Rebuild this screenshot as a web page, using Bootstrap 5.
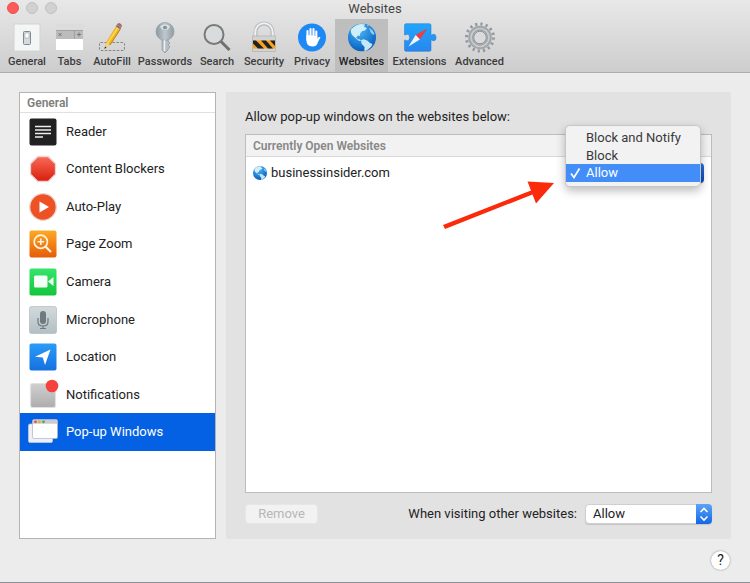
<!DOCTYPE html>
<html lang="en">
<head>
<meta charset="utf-8">
<meta name="viewport" content="width=device-width, initial-scale=1">
<title>Websites</title>
<link href="https://cdn.jsdelivr.net/npm/bootstrap@5.3.0/dist/css/bootstrap.min.css" rel="stylesheet">
<style>
body{font-family:Roboto,"Liberation Sans",sans-serif;font-size:13px;line-height:18px;color:#222;background:#ececec}
.win{min-height:100vh;border-bottom:1px solid #8a9094}
.titlebar{height:73px;background:linear-gradient(#e8e8e8,#cdcdcd);border-bottom:1px solid #adadad}
.caption-row{height:19px;color:#444}
.lights{left:7px;top:2px;gap:7px}
.light{width:12px;height:12px;border-radius:50%;background:#d2d1d1;border:1px solid #c2c1c1;padding:0}
.light-close{background:#fc5b57;border-color:#e9544f}
.tools{display:grid;grid-template-columns:46px 39px 46px 60px 44px 50px 46px 53px 63px 57px;height:53px;padding-left:4px}
.tool{border:0;background:none;padding:4px 0 0;font-size:11px;line-height:18px;color:#3c3c3c;white-space:nowrap;display:flex;flex-direction:column;align-items:center;font-weight:500}
.tool svg{width:32px;height:30px;flex:none;overflow:visible}
.tool.on{background:#bebebe;color:#222}
.main-area{padding:19px 19px 0 19px;gap:10px}
.side{width:197px;background:#fff;border:1px solid #b4b4b4;flex:none}
.side-head{height:20px;line-height:20px;padding-left:7px;font-size:12px;font-weight:600;color:#7d7d7d;border-bottom:1px solid #e0e0e0}
.side-list{height:338px;display:grid;grid-template-rows:repeat(9,1fr)}
.side-item{border:0;background:none;width:100%;height:100%;padding:0 0 0 7px;gap:7px;color:#222}
.side-item svg{width:32px;height:32px;flex:none;overflow:visible}
.side-item.on{background:#0561e4;color:#fff}
.panel{background:#e2e2e2;border-radius:2px;padding:16px 19px 15px;min-width:0}
.sites{background:#fff;border:1px solid #bcbcbc}
.sites-head{height:22px;line-height:23px;padding-left:7px;font-size:12px;font-weight:600;color:#888;background:#f2f2f2;border-bottom:1px solid #d9d9d9}
.site-row{height:32px;padding:0 7px 0 6px;gap:3px}
.site-row svg.globe{width:16px;height:16px}
.pick{position:relative}
.pick .form-select{font-size:13px;line-height:18px;height:20px;padding:0 24px 0 7px;border:1px solid #cfcfcf;border-radius:4px;background:#fff;color:#222;box-shadow:0 1px 1px #0002}
.pick svg{position:absolute;right:0;top:0;width:16px;height:20px;pointer-events:none}
.pick-row{width:138px}
.pick-other{width:127px}
.choices{position:absolute;right:3px;top:-38px;width:136px;padding:3px 0 4px;background:#f2f2f3;border:1px solid #c6c6c6;border-radius:5px;box-shadow:0 4px 10px #0004;z-index:3;list-style:none;margin:0}
.choices button{display:block;width:100%;border:0;background:none;text-align:left;padding:0 0 0 20px;height:18px;line-height:18px;color:#3a3a3a;position:relative;white-space:nowrap}
.choices li:nth-child(2) button{height:17px;line-height:17px}
.choices button.on{background:#428df8;color:#fff}
.choices .tick{position:absolute;left:4px;top:3px;width:11px;height:12px;right:auto}
.arrow{position:absolute;left:197px;top:45px;width:114px;height:52px}
.remove{width:73px;height:20px;line-height:18px;padding:0;border:1px solid #e6e6e6;border-radius:4px;background:#f2f2f2;color:#b6b6b6}
.foot{margin-top:11px}
.bottom{height:43px;padding:12px 20px 0 0}
.help{width:19px;height:19px;border-radius:50%;border:0;background:#fff;box-shadow:0 0 2px #0007;padding:0;font-size:14px;line-height:19px;color:#222}
</style>
<script src="https://cdn.jsdelivr.net/npm/bootstrap@5.3.0/dist/js/bootstrap.bundle.min.js"></script>
</head>
<body>
<svg width="0" height="0" class="position-absolute" aria-hidden="true">
<defs>
<radialGradient id="sea" cx=".4" cy=".25" r=".8"><stop offset="0" stop-color="#4db4ef"/><stop offset=".6" stop-color="#1d7fd6"/><stop offset="1" stop-color="#0a56ae"/></radialGradient>
<linearGradient id="gBlue" x2="0" y2="1"><stop stop-color="#2a9cf8"/><stop offset="1" stop-color="#1570e0"/></linearGradient>
<linearGradient id="gPuzzle" x2="0" y2="1"><stop stop-color="#21a6fb"/><stop offset="1" stop-color="#2787f0"/></linearGradient>
<linearGradient id="gStep" x2="0" y2="1"><stop stop-color="#5aa5f8"/><stop offset="1" stop-color="#1466e8"/></linearGradient>
<linearGradient id="gDeep" x2="0" y2="1"><stop stop-color="#2a72df"/><stop offset="1" stop-color="#0a48bb"/></linearGradient>
<linearGradient id="gRed" x2="0" y2="1"><stop stop-color="#fa6a58"/><stop offset="1" stop-color="#d81e0c"/></linearGradient>
<linearGradient id="gOrange" x2="0" y2="1"><stop stop-color="#fbaa25"/><stop offset="1" stop-color="#e65c0a"/></linearGradient>
<linearGradient id="gGreen" x2="0" y2="1"><stop stop-color="#35e46a"/><stop offset="1" stop-color="#14c53c"/></linearGradient>
<linearGradient id="gGrey" x2="0" y2="1"><stop stop-color="#d3dadc"/><stop offset="1" stop-color="#b3bfc3"/></linearGradient>
<linearGradient id="gNote" x2="0" y2="1"><stop stop-color="#d0d0d0"/><stop offset="1" stop-color="#adadad"/></linearGradient>
<linearGradient id="gKey" x2="1"><stop stop-color="#8d999f"/><stop offset=".5" stop-color="#bec8ce"/><stop offset="1" stop-color="#8e9aa1"/></linearGradient>
<symbol id="earth" viewBox="0 0 28 28">
<circle cx="14" cy="14" r="14" fill="url(#sea)"/>
<path d="M3 6Q7 1 13 .4l4 .6-1 2.200 3 1.200-2 2.500-2.800.6-2.400 3 .4 2-2.200-.6-1.800 2.200 1.800 1.700 2 .3 1 1.500-2.300-.3L7.500 14.500 4 11.500 2.800 8.500z" fill="#d0edfa"/>
<path d="M13 16.500l3-.8 3.500 1.600 2.500 2.200 2.500 1-1.300 2.700-3.200 2.800L18 27.300l-1.700.2.300-4.100-3-3.200z" fill="#c5e8f8"/>
<path d="M21 4l3.300 2.500L26.500 10l-1.300 1.500-2.700-2.700zM19 1.200l2 1-1.500.9z" fill="#8fcdf2"/>
</symbol>
</defs>
</svg>
<div class="win d-flex flex-column">
<header class="titlebar flex-shrink-0 position-relative">
<div class="lights d-flex position-absolute">
<button class="light light-close" aria-label="Close"></button><button class="light" aria-label="Minimize" disabled></button><button class="light" aria-label="Zoom" disabled></button>
</div>
<div class="caption-row text-center">Websites</div>
<nav class="tools" aria-label="Preferences">
<button class="tool"><svg viewBox="0 0 32 30" aria-hidden="true"><rect x="3" y="1" width="26" height="27" fill="#f4f6f6" stroke="#d2d4d4"/><rect x="12.500" y="8.500" width="7" height="13" rx="1" fill="#d4dbde" stroke="#7f898d"/><rect x="14" y="10" width="4" height="5" fill="#fff" stroke="#a5afb3" stroke-width=".7"/></svg>General</button>
<button class="tool"><svg viewBox="0 0 32 30" aria-hidden="true"><rect x="2" y="1" width="27" height="6" fill="#dcdcdc"/><path d="M2 7.500h27v9H2z" fill="#bcbcbc"/><path d="M2 7.500h27M20.500 7v9" stroke="#a1a1a1"/><rect x="2" y="16" width="27" height="11" fill="#fff"/><path d="M4.500 10l3 3m0-3l-3 3M23 11.500h4m-2-2v4" stroke="#777"/></svg>Tabs</button>
<button class="tool"><svg viewBox="0 0 32 30" aria-hidden="true"><rect x="3.500" y="19.500" width="25" height="8" rx="1" fill="none" stroke="#858585" stroke-dasharray="2.500 1.500"/><path d="M8.500 26l1.200-6L19.800 3.500l4.500 2.700L14 22z" fill="#f0b429"/><path d="M11.500 20.500L22 4.500" stroke="#fbdb50" stroke-width="1.500"/><path d="M14 22L24.300 6.200" stroke="#c17b0d"/><path d="M8.500 26l1.200-6 2 .5 2.200 1.500z" fill="#ecd0a4"/><path d="M8.500 26l.5-2.500 1.500 1z" fill="#222"/><path d="M19.800 3.500l4.500 2.700 1-1.700-4.500-2.700z" fill="#71777d"/><path d="M20.800 1.800Q22-.7 24.200.4q2.500 1.300 1.200 3.800z" fill="#b66370"/></svg>AutoFill</button>
<button class="tool"><svg viewBox="0 0 32 30" aria-hidden="true"><path d="M13 15h6v3l2 2-2 2 2 2-2 2v1l-3 3-3-3z" fill="#b4bec4" stroke="#8b969c" stroke-width=".7"/><circle cx="16" cy="8.500" r="9" fill="url(#gKey)" stroke="#8c999f" stroke-width=".7"/><path d="M11 3.500q5-4 10 0l-2 3h-6z" fill="#dce4e7"/><ellipse cx="16" cy="4.500" rx="2.200" ry="1.800" fill="#87939b"/><path d="M15.500 17v11" stroke="#edf1f3" stroke-width="1.500"/></svg>Passwords</button>
<button class="tool"><svg viewBox="0 0 32 30" aria-hidden="true"><circle cx="13" cy="11.500" r="9.500" fill="#d9dcdd" stroke="#797979" stroke-width="2"/><path d="M20 18.500l8.500 8.500" stroke="#707070" stroke-width="3"/></svg>Search</button>
<button class="tool"><svg viewBox="0 0 32 30" aria-hidden="true"><path d="M7.500 14V9a8.500 8.500 0 0 1 17 0v5" fill="none" stroke="#b4b8ba" stroke-width="4"/><path d="M7.300 14V9a8.700 8.700 0 0 1 17.400 0v5" fill="none" stroke="#eef0f1" stroke-width="2"/><rect x="4.500" y="13" width="23" height="15.500" fill="#d2d2d2" stroke="#aaa" stroke-width=".6"/><path d="M5 17.500h22v8H5z" fill="#f7a51f"/><path d="M5 17.500h3l8 8h-6l-5-5zM13 17.500h5l7 8h-5zM22 17.500h5v5.500z" fill="#222"/></svg>Security</button>
<button class="tool"><svg viewBox="0 0 32 30" aria-hidden="true"><circle cx="16" cy="14.500" r="14" fill="#1e88f5"/><path d="M11.500 8v9M14.500 6v11M17.500 6v11M20.300 8.500V18" stroke="#fff" stroke-width="2.100" stroke-linecap="round"/><path d="M10.400 12v5q0 6.500 6 6.500 4.600 0 5.600-4.500l2.400-4.500q-.8-1.500-2.400.3l-.7 1.200v-3z" fill="#fff"/></svg>Privacy</button>
<button class="tool on" aria-current="page"><svg viewBox="0 0 32 30" aria-hidden="true"><use href="#earth" x="2" y=".5" width="28" height="28"/></svg>Websites</button>
<button class="tool"><svg viewBox="0 0 32 30" aria-hidden="true"><path d="M2 .7h23.500q1.500 0 1.500 1.500v9.600q.8.700 1.500-.3 3.500-1 3.500 3t-3.500 3q-.7-1-1.500-.3v9.600q0 1.500-1.500 1.500H2q-1.500 0-1.500-1.500v-9.600q.8-.7 1.500.3 3.500 1 3.500-3t-3.500-3q-.7 1-1.500.3V2.200Q.5.700 2 .7z" fill="url(#gPuzzle)" stroke="#1e70cd" stroke-width=".5"/><path d="M23.500 5.500L11.700 12l4.200 4.500z" fill="#ee3d3d"/><path d="M4.500 23.500L11.700 12l4.200 4.500z" fill="#f2f6fa"/></svg>Extensions</button>
<button class="tool"><svg viewBox="0 0 32 30" aria-hidden="true"><circle cx="16" cy="14.500" r="13.500" fill="none" stroke="#92989b" stroke-width="3" stroke-dasharray="2.200 3.101"/><circle cx="16" cy="14.500" r="9.300" fill="none" stroke="#a0a6a9" stroke-width="5"/><circle cx="16" cy="14.500" r="9" fill="none" stroke="#c8cccd" stroke-width="1.700"/><circle cx="16" cy="14.500" r="6.300" fill="#d9dada" stroke="#888f93"/></svg>Advanced</button>
</nav>
</header>
<main class="main-area d-flex flex-grow-1">
<aside class="side">
<div class="side-head">General</div>
<ul class="side-list list-unstyled m-0">
<li><button class="side-item d-flex align-items-center"><svg viewBox="0 0 32 32" aria-hidden="true"><rect x="2.500" y="2.500" width="27" height="27" rx="2" fill="#212121"/><path d="M8 10.500h16M8 14h16M8 17.500h16M8 21h8" stroke="#eee" stroke-width="1.700"/></svg>Reader</button></li>
<li><button class="side-item d-flex align-items-center"><svg viewBox="0 0 32 32" aria-hidden="true"><path d="M10.800 3.500h10.400l7.300 7.300v10.400l-7.300 7.300H10.800l-7.300-7.300V10.800z" fill="url(#gRed)" stroke="#efd6d4" stroke-width="1.300"/></svg>Content Blockers</button></li>
<li><button class="side-item d-flex align-items-center"><svg viewBox="0 0 32 32" aria-hidden="true"><circle cx="16" cy="16" r="13.300" fill="#ee5224" stroke="#ead8d2" stroke-width="1.300"/><path d="M12.500 10.500v11l9.500-5.500z" fill="#fff"/></svg>Auto-Play</button></li>
<li><button class="side-item d-flex align-items-center"><svg viewBox="0 0 32 32" aria-hidden="true"><rect x="2.500" y="2.500" width="27" height="27" rx="2" fill="url(#gOrange)"/><circle cx="13.800" cy="13.800" r="6.600" fill="none" stroke="#fff3df" stroke-width="1.700"/><path d="M18.500 18.500l5.500 5.500" stroke="#fff3df" stroke-width="2.200"/><path d="M10.500 13.800h6.600m-3.300-3.300v6.600" stroke="#fff3df" stroke-width="1.600"/></svg>Page Zoom</button></li>
<li><button class="side-item d-flex align-items-center"><svg viewBox="0 0 32 32" aria-hidden="true"><rect x="2.500" y="2.500" width="27" height="27" rx="2" fill="url(#gGreen)"/><rect x="7" y="9.500" width="13.500" height="12" rx="1.500" fill="#f4fff5"/><path d="M21 15.500l5.500-4.500v9z" fill="#eefff0"/></svg>Camera</button></li>
<li><button class="side-item d-flex align-items-center"><svg viewBox="0 0 32 32" aria-hidden="true"><rect x="2.500" y="2.500" width="27" height="27" rx="2" fill="url(#gGrey)" stroke="#aab3b6" stroke-width=".6"/><rect x="13" y="7" width="6" height="13" rx="3" fill="#6d7a80"/><path d="M11 14v4q0 4 5 4t5-4v-4M16 22v2m-3 .5h6" fill="none" stroke="#6d7a80" stroke-width="1.200"/></svg>Microphone</button></li>
<li><button class="side-item d-flex align-items-center"><svg viewBox="0 0 32 32" aria-hidden="true"><rect x="2.500" y="2.500" width="27" height="27" rx="2" fill="url(#gBlue)"/><path d="M23.500 8.500L8 15.800l7.800.7 2.200 7.500z" fill="#fff"/></svg>Location</button></li>
<li><button class="side-item d-flex align-items-center"><svg viewBox="0 0 32 32" aria-hidden="true"><rect x="3.500" y="4.500" width="25" height="24" rx="2" fill="url(#gNote)" stroke="#e1e1e1" stroke-width="1.200"/><circle cx="25" cy="7" r="6.300" fill="#f4423f"/></svg>Notifications</button></li>
<li><button class="side-item on d-flex align-items-center" aria-current="true"><svg viewBox="0 0 32 32" aria-hidden="true"><rect x="1.500" y="8" width="24" height="18.500" rx="1.500" fill="#edf0f4" stroke="#c7cfd9" stroke-width=".7"/><rect x="5.500" y="3.500" width="25" height="19" rx="1.500" fill="#fff" stroke="#aab6ca" stroke-width=".7"/><path d="M5.900 5q0-1.100 1.100-1.100h22q1.100 0 1.100 1.100v2.700H5.900z" fill="#ccc"/><circle cx="8.500" cy="5.800" r="1.400" fill="#e85046"/><circle cx="12.500" cy="5.800" r="1.400" fill="#e9aa2d"/><circle cx="16.500" cy="5.800" r="1.400" fill="#4cab46"/></svg>Pop-up Windows</button></li>
</ul>
</aside>
<section class="panel flex-grow-1 d-flex flex-column">
<div id="prompt">Allow pop-up windows on the websites below:</div>
<div class="sites flex-grow-1 mt-2 position-relative" aria-labelledby="prompt">
<div class="sites-head">Currently Open Websites</div>
<div class="site-row d-flex align-items-center">
<svg class="globe" aria-hidden="true"><use href="#earth" x="1" y="1" width="14" height="14"/></svg>
<label for="sitePick">businessinsider.com</label>
<div class="pick pick-row ms-auto">
<select id="sitePick" class="form-select"><option>Allow</option><option>Block</option><option>Block and Notify</option></select>
<svg viewBox="0 0 16 20" aria-hidden="true"><path d="M0 0h12q4 0 4 4v12q0 4-4 4H0z" fill="url(#gDeep)"/></svg>
<ul class="choices">
<li><button>Block and Notify</button></li>
<li><button>Block</button></li>
<li><button class="on"><svg class="tick" viewBox="0 0 11 12" aria-hidden="true"><path d="M1 6.500l3 4L9.500 1.500" fill="none" stroke="#fff" stroke-width="1.700"/></svg>Allow</button></li>
</ul>
</div>
</div>
<svg class="arrow" viewBox="0 0 114 52" aria-hidden="true"><path d="M0 45L88 10.500 84.500 1.500 111 3 93 23.500 89.500 14.500 2 49z" fill="#fb2a0b"/></svg>
</div>
<div class="foot d-flex align-items-center">
<button class="remove" disabled>Remove</button>
<label for="otherPick" class="ms-auto me-2">When visiting other websites:</label>
<div class="pick pick-other">
<select id="otherPick" class="form-select"><option>Allow</option><option>Block</option><option>Block and Notify</option></select>
<svg viewBox="0 0 16 20" aria-hidden="true"><path d="M0 0h12q4 0 4 4v12q0 4-4 4H0z" fill="url(#gStep)"/><path d="M4.500 8L8 4.500 11.500 8M4.500 12.500L8 16l3.500-3.500" fill="none" stroke="#fff" stroke-width="1.600"/></svg>
</div>
</div>
</section>
</main>
<footer class="bottom d-flex justify-content-end align-items-start"><button class="help" aria-label="Help">?</button></footer>
</div>
</body>
</html>
